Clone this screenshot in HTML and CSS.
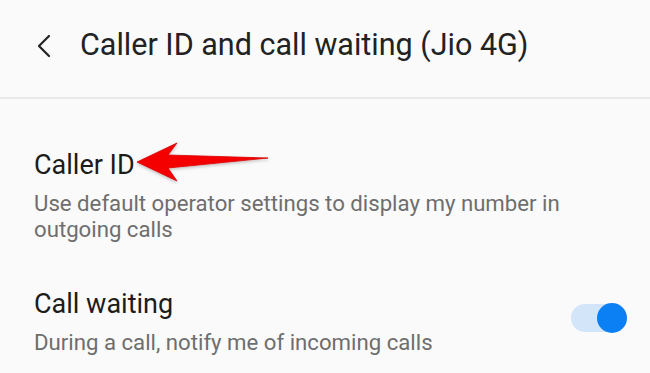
FILE: index.html
```html
<!DOCTYPE html>
<html lang="en">
<head>
  <meta charset="UTF-8" />
  <meta name="viewport" content="width=device-width, initial-scale=1" />
  <title>Caller ID and call waiting</title>
  <link rel="stylesheet" href="styles.css">
</head>
<body>
  <header class="topbar">
    <svg class="back" width="16" height="24" viewBox="0 0 16 24">
      <path d="M13 2 L3 12 L13 22" fill="none" stroke="#222" stroke-width="2.2" stroke-linecap="round" stroke-linejoin="round"/>
    </svg>
    <h1 class="title">Caller ID and call waiting (Jio 4G)</h1>
  </header>

  <main class="list">
    <div class="item first">
      <div class="item-text">
        <div class="item-title">Caller ID</div>
        <div class="item-sub">Use default operator settings to display my number in outgoing calls</div>
      </div>
    </div>

    <div class="item">
      <div class="item-text">
        <div class="item-title">Call waiting</div>
        <div class="item-sub">During a call, notify me of incoming calls</div>
      </div>
      <div class="switch on"><span class="knob"></span></div>
    </div>
  </main>

  <svg class="pointer" width="150" height="50" viewBox="0 0 150 50">
    <defs>
      <filter id="sh" x="-10%" y="-20%" width="120%" height="160%">
        <feDropShadow dx="0" dy="1.5" stdDeviation="1.5" flood-color="#000" flood-opacity="0.25"/>
      </filter>
    </defs>
    <path d="M7 25 L47 6 L38 18 L138 21 L38 31 L47 44 Z" fill="#f50000" stroke="#d80000" stroke-width="0.8" stroke-linejoin="round" filter="url(#sh)"/>
  </svg>
</body>
</html>
```

FILE: styles.css
```css
body {
  margin: 0;
  background-color: #fafafa;
  font-family: Roboto, "Noto Sans", sans-serif;
  color: #1f1f1f;
  position: relative;
  height: 373px;
  overflow: hidden;
}
.topbar {
  height: 89px;
  padding-bottom: 8px;
  display: flex;
  align-items: center;
  padding-left: 36px;
  border-bottom: 2px solid #e9e9e9;
  box-sizing: content-box;
}
.back {
  flex: none;
  margin-top: 2px;
}
.title {
  margin: 0 0 0 28px;
  font-size: 30.5px;
  font-weight: 400;
  color: #222;
}
.list {
  padding: 0 24px 0 34px;
}
.item {
  display: flex;
  align-items: center;
  justify-content: space-between;
}
.item.first {
  padding-top: 51px;
}
.item + .item {
  margin-top: 47px;
}
.item-title {
  font-size: 27px;
  line-height: 30px;
  color: #1c1c1c;
}
.item-sub {
  font-size: 22.2px;
  line-height: 26px;
  color: #6e6e6e;
  margin-top: 10px;
  max-width: 560px;
}
.switch {
  width: 50px;
  height: 28px;
  border-radius: 14px;
  background-color: #d3e5f9;
  position: relative;
  margin-right: 5px;
  margin-top: -8px;
}
.switch .knob {
  position: absolute;
  right: -6px;
  top: -1px;
  width: 30px;
  height: 30px;
  border-radius: 50%;
  background-color: #0b7ff4;
}
.pointer {
  position: absolute;
  left: 130px;
  top: 137px;
}
```
